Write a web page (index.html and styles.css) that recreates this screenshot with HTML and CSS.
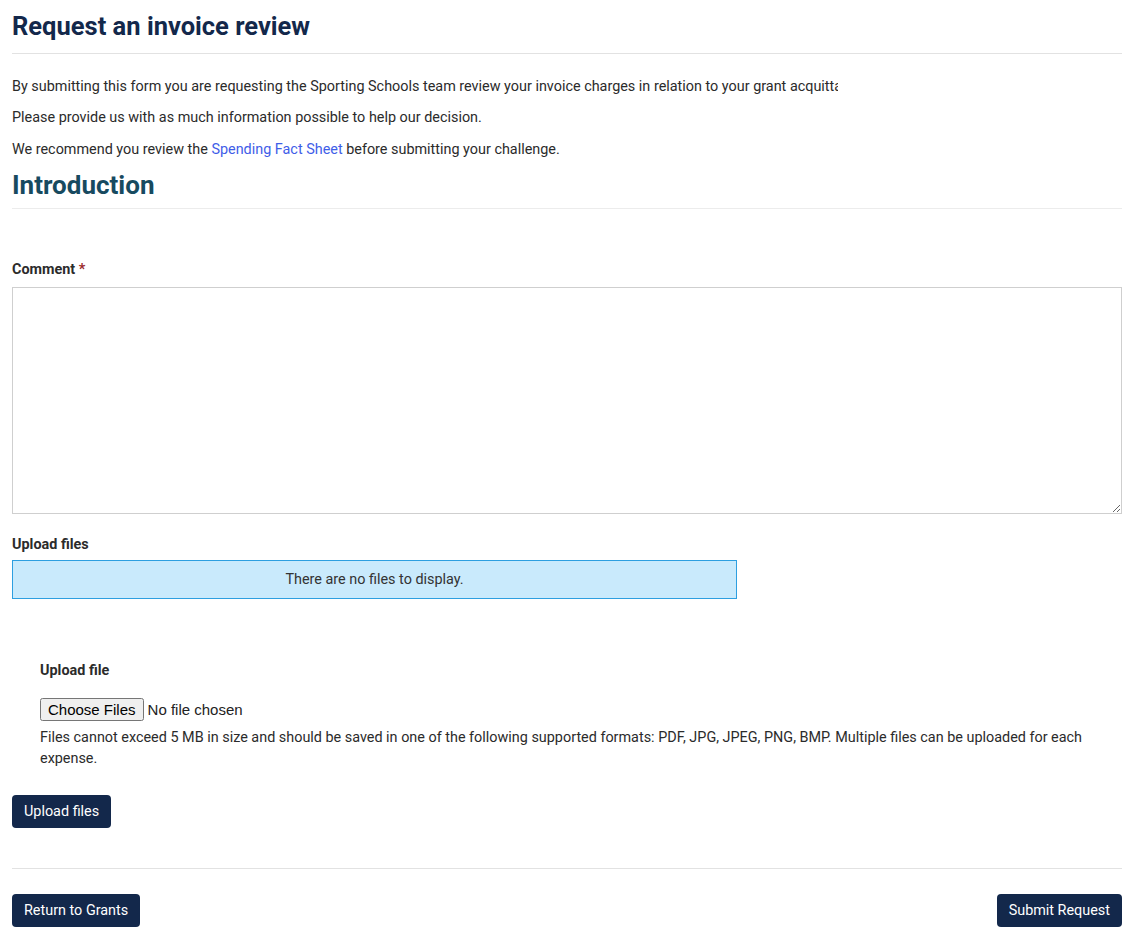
FILE: index.html
```html
<!DOCTYPE html>
<html lang="en">
<head>
  <meta charset="UTF-8">
  <meta name="viewport" content="width=device-width, initial-scale=1.0">
  <title>Request an invoice review</title>
  <link rel="stylesheet" href="styles.css">
</head>
<body>

  <h1 class="page-title">Request an invoice review</h1>

  <div class="intro">
    <p class="clip">By submitting this form you are requesting the Sporting Schools team review your invoice charges in relation to your grant acquittal.</p>
    <p>Please provide us with as much information possible to help our decision.</p>
    <p>We recommend you review the <a href="#">Spending Fact Sheet</a> before submitting your challenge.</p>
  </div>

  <h2 class="section-title">Introduction</h2>

  <form class="review-form" onsubmit="return false">
    <div class="field">
      <label for="comment">Comment <span class="req">*</span></label>
      <textarea id="comment"></textarea>
    </div>

    <div class="field">
      <label class="files-label">Upload files</label>
      <div class="no-files">There are no files to display.</div>
    </div>

    <div class="upload-box">
      <label for="fileInput">Upload file</label>
      <input type="file" id="fileInput" multiple>
      <p class="hint">Files cannot exceed 5 MB in size and should be saved in one of the following supported formats: PDF, JPG, JPEG, PNG, BMP. Multiple files can be uploaded for each expense.</p>
    </div>

    <button class="btn" type="button">Upload files</button>

    <div class="actions">
      <button class="btn" type="button">Return to Grants</button>
      <button class="btn" type="submit">Submit Request</button>
    </div>
  </form>

</body>
</html>
```

FILE: styles.css
```css
body {
  font-family: Roboto, "Liberation Sans", sans-serif;
  font-size: 14.4px;
  color: #2b2b2b;
  background: #fff;
  margin: 0;
  padding: 0 12px;
}
.page-title {
  font-size: 25.5px;
  font-weight: 700;
  color: #13284b;
  margin: 0;
  padding: 11px 0 12px;
  line-height: 30px;
  border-bottom: 1px solid #e2e2e2;
}
.intro p {
  margin: 0;
  line-height: 20px;
  padding: 11px 0 0;
}
.intro p + p {
  padding-top: 11px;
}
.intro p:last-child {
  padding-top: 12px;
}
.intro .clip {
  width: 826px;
  white-space: nowrap;
  overflow: hidden;
  padding-top: 23px;
}
.intro a {
  color: #3f5ee8;
  text-decoration: none;
}
.section-title {
  font-size: 26px;
  font-weight: 700;
  color: #174a60;
  margin: 0;
  padding: 10px 0 8px;
  line-height: 30px;
  border-bottom: 1px solid #ececec;
}
.review-form {
  padding-top: 51px;
}
label {
  display: block;
  font-weight: 700;
  color: #2b2b2b;
  margin-bottom: 7px;
  line-height: 20px;
}
.files-label {
  margin-bottom: 5px;
}
.req {
  color: #9b2c2c;
}
textarea {
  display: block;
  width: 100%;
  height: 227px;
  box-sizing: border-box;
  border: 1px solid #cfcfcf;
  padding: 6px;
  font-family: inherit;
  font-size: 14px;
  margin-bottom: 21px;
}
.no-files {
  width: 725px;
  box-sizing: border-box;
  height: 39px;
  line-height: 37px;
  text-align: center;
  background: #c9eafc;
  border: 1px solid #2d9fe0;
  color: #333;
}
.upload-box {
  padding: 62px 28px 26px;
}
.upload-box label {
  margin-bottom: 17px;
}
input[type="file"] {
  font-family: "Liberation Sans", Arial, sans-serif;
  font-size: 15px;
  color: #222;
}
.hint {
  margin: 6px 0 0;
  line-height: 21px;
}
.btn {
  background-color: #13284b;
  color: white;
  border: none;
  border-radius: 4px;
  font-family: inherit;
  font-size: 14.4px;
  padding: 0 12px;
  height: 33px;
  cursor: pointer;
}
.actions {
  display: flex;
  justify-content: space-between;
  margin-top: 40px;
  padding-top: 25px;
  border-top: 1px solid #e2e2e2;
}
```
